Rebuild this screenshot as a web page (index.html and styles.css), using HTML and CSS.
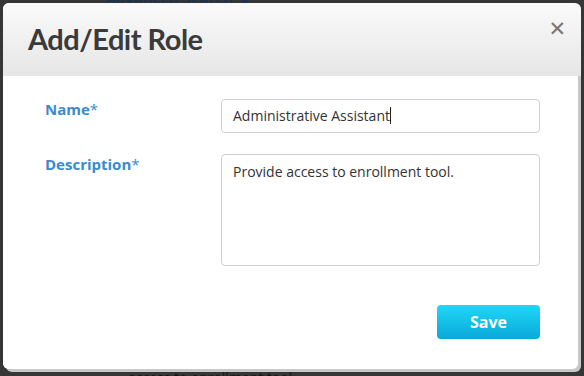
FILE: index.html
```html
<!DOCTYPE html>
<html>
<head>
<meta charset="utf-8">
<link rel="stylesheet" href="styles.css">
</head>
<body>
<div class="page">
  <div class="page-top">Advanced Search &#9650;</div>
  <div class="page-bottom">access to enrollment tool</div>
</div>
<div class="modal">
  <div class="modal-header">
    <h1 class="modal-title">Add/Edit Role</h1>
    <span class="close">&#x2715;</span>
  </div>
  <div class="modal-body">
    <div class="row">
      <label class="label">Name<span class="req">*</span></label>
      <div class="field input">Administrative Assistant<span class="caret"></span></div>
    </div>
    <div class="row">
      <label class="label">Description<span class="req">*</span></label>
      <div class="field textarea">Provide access to enrollment tool.</div>
    </div>
    <div class="actions">
      <button class="save">Save</button>
    </div>
  </div>
</div>
</body>
</html>
```
FILE: styles.css
```css
html, body {
  margin: 0;
  padding: 0;
}
body {
  width: 584px;
  height: 376px;
  background: #363636;
  overflow: hidden;
  position: relative;
  font-family: "Open Sans", "Liberation Sans", sans-serif;
}
.page {
  height: 376px;
  display: flex;
  flex-direction: column;
  justify-content: space-between;
  padding-left: 105px;
}
.page-top {
  color: #1e3250;
  font-size: 15px;
  font-weight: 700;
  line-height: 14px;
  margin-top: -9px;
}
.page-bottom {
  color: #151515;
  font-size: 14px;
  line-height: 14px;
  margin-bottom: -9px;
  padding-left: 23px;
}
.modal {
  position: absolute;
  left: 3px;
  top: 3px;
  width: 575px;
  height: 366px;
  border-radius: 6px;
  background: #fff;
  box-shadow: 3px 3px 0 #c8c8c8;
  display: flex;
  flex-direction: column;
}
.modal-header {
  height: 73px;
  border-radius: 6px 6px 0 0;
  background: linear-gradient(#fafafa, #e6e6e6);
  display: flex;
  justify-content: space-between;
  align-items: flex-start;
  padding: 0 15px 0 25px;
  box-sizing: border-box;
  width: 578px;
}
.modal-title {
  margin: 18px 0 0 0;
  font-family: Lato, "Liberation Sans", sans-serif;
  font-weight: 700;
  font-size: 29px;
  color: #3a3a3a;
  letter-spacing: -0.5px;
}
.close {
  margin-top: 14px;
  font-size: 21px;
  font-weight: 700;
  color: #777;
  font-family: "DejaVu Sans", sans-serif;
}
.modal-body {
  flex: 1;
  border-radius: 5px 5px 6px 6px;
  background: #fff;
  padding: 23px 38px 0 42px;
  display: flex;
  flex-direction: column;
}
.row {
  display: flex;
  align-items: flex-start;
  margin-bottom: 21px;
}
.label {
  width: 176px;
  font-family: "Open Sans", sans-serif;
  font-weight: 700;
  font-size: 15px;
  color: #3a8ad0;
  line-height: 20px;
}
.req {
  font-weight: 400;
}
.field {
  flex: 1;
  border: 1px solid #cfcfcf;
  border-radius: 4px;
  font-size: 14px;
  color: #333;
  padding: 6px 11px;
  box-sizing: border-box;
  line-height: 20px;
}
.input {
  height: 34px;
}
.caret {
  display: inline-block;
  width: 1px;
  height: 17px;
  background: #222;
  vertical-align: -3px;
}
.textarea {
  height: 112px;
  padding-top: 7px;
}
.actions {
  display: flex;
  justify-content: flex-end;
  margin-top: 18px;
}
.save {
  width: 103px;
  height: 34px;
  border: 0;
  border-radius: 4px;
  background: linear-gradient(#1fd8f6, #0aa8da);
  color: #fff;
  font-family: "Open Sans", sans-serif;
  font-weight: 700;
  font-size: 16px;
}
```
